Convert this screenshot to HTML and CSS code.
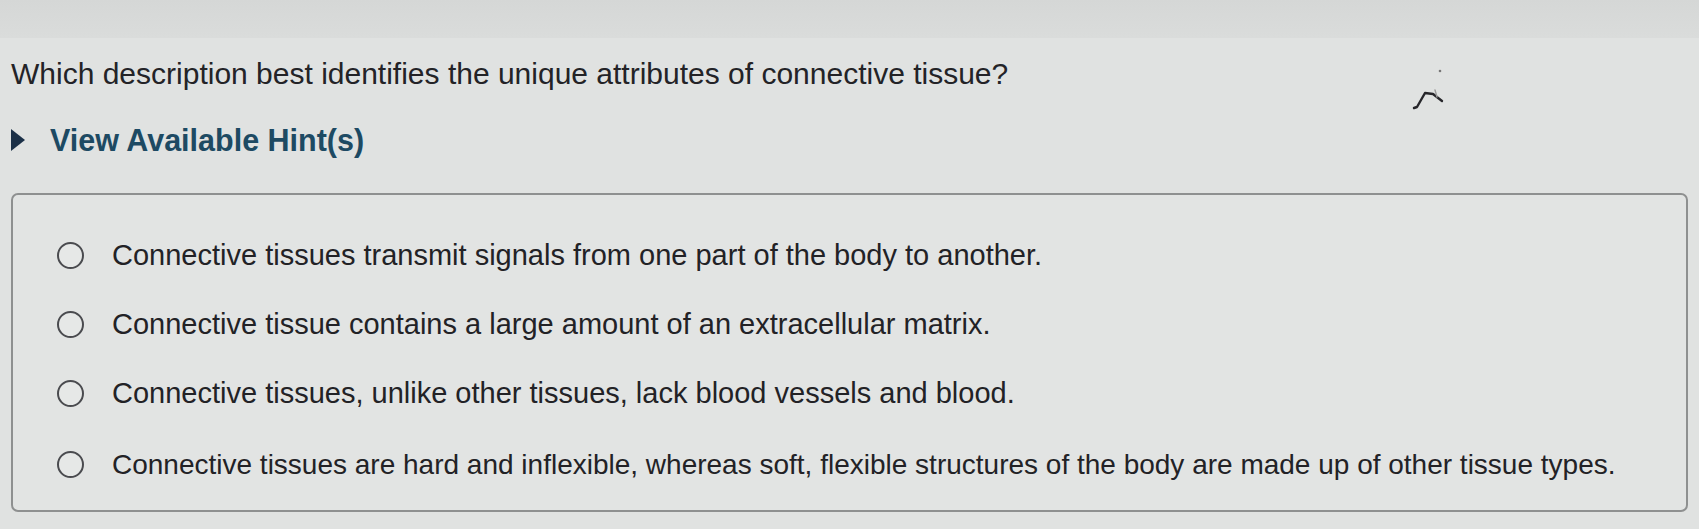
FILE: index.html
```html
<!DOCTYPE html>
<html lang="en">
<head>
<meta charset="utf-8">
<title>Question</title>
<link rel="stylesheet" href="styles.css">
</head>
<body>
<div class="topbar"></div>
<main class="page">
  <div class="question-row">
    <p class="question">Which description best identifies the unique attributes of connective tissue?</p>
    <svg class="mark" width="40" height="44" viewBox="0 0 40 44" aria-hidden="true">
      <circle cx="30" cy="3" r="1.3" fill="#777"/>
      <path d="M4 40 L7 39 L15 25 L23 26 L32 33" fill="none" stroke="#26262a" stroke-width="2.4" stroke-linecap="round" stroke-linejoin="round"/>
      <path d="M25 22 L27 29" fill="none" stroke="#9a9a9a" stroke-width="1.4" stroke-linecap="round"/>
    </svg>
  </div>
  <div class="hint">
    <span class="tri"></span>
    <span class="hint-text">View Available Hint(s)</span>
  </div>
  <div class="choices">
    <label class="choice"><span class="radio"></span><span class="choice-text">Connective tissues transmit signals from one part of the body to another.</span></label>
    <label class="choice"><span class="radio"></span><span class="choice-text">Connective tissue contains a large amount of an extracellular matrix.</span></label>
    <label class="choice"><span class="radio"></span><span class="choice-text">Connective tissues, unlike other tissues, lack blood vessels and blood.</span></label>
    <label class="choice"><span class="radio"></span><span class="choice-text">Connective tissues are hard and inflexible, whereas soft, flexible structures of the body are made up of other tissue types.</span></label>
  </div>
</main>
</body>
</html>
```
FILE: styles.css
```css
* { box-sizing: border-box; }
html, body { margin: 0; padding: 0; }
body {
  background: #e0e2e1;
  font-family: "Liberation Sans", Arial, Helvetica, sans-serif;
  color: #232327;
  height: 529px;
  overflow: hidden;
}
.topbar {
  height: 38px;
  background: linear-gradient(#d5d7d6, #dadcdb);
}
.page {
  padding: 0 11px 0 11px;
}
.question-row {
  position: relative;
  height: 84px;
}
.question {
  margin: 0;
  padding-top: 18px;
  font-size: 30px;
  line-height: 36px;
}
.mark {
  position: absolute;
  left: 1399px;
  top: 30px;
}
.hint {
  display: flex;
  align-items: center;
  gap: 25px;
  height: 36px;
  margin-left: 0;
}
.tri {
  width: 0; height: 0;
  border-top: 11px solid transparent;
  border-bottom: 11px solid transparent;
  border-left: 14px solid #1b3047;
}
.hint-text {
  font-weight: bold;
  font-size: 30.5px;
  color: #1d4a63;
}
.choices {
  margin-top: 35px;
  border: 2px solid #8e9090;
  border-radius: 7px;
  background: #e2e4e3;
  height: 319px;
  padding: 43px 0 0 44px;
  display: flex;
  flex-direction: column;
  gap: 34px;
}
.choice {
  display: flex;
  align-items: center;
  gap: 28px;
  height: 35px;
}
.choice:last-child {
  margin-top: 2px;
}
.radio {
  width: 27px; height: 27px;
  border: 2.5px solid #4a4b4f;
  border-radius: 50%;
  background: #e6e8e7;
  flex: 0 0 auto;
}
.choice-text {
  font-size: 29px;
  color: #222226;
}
.choice:last-child .choice-text {
  font-size: 28px;
}
```
